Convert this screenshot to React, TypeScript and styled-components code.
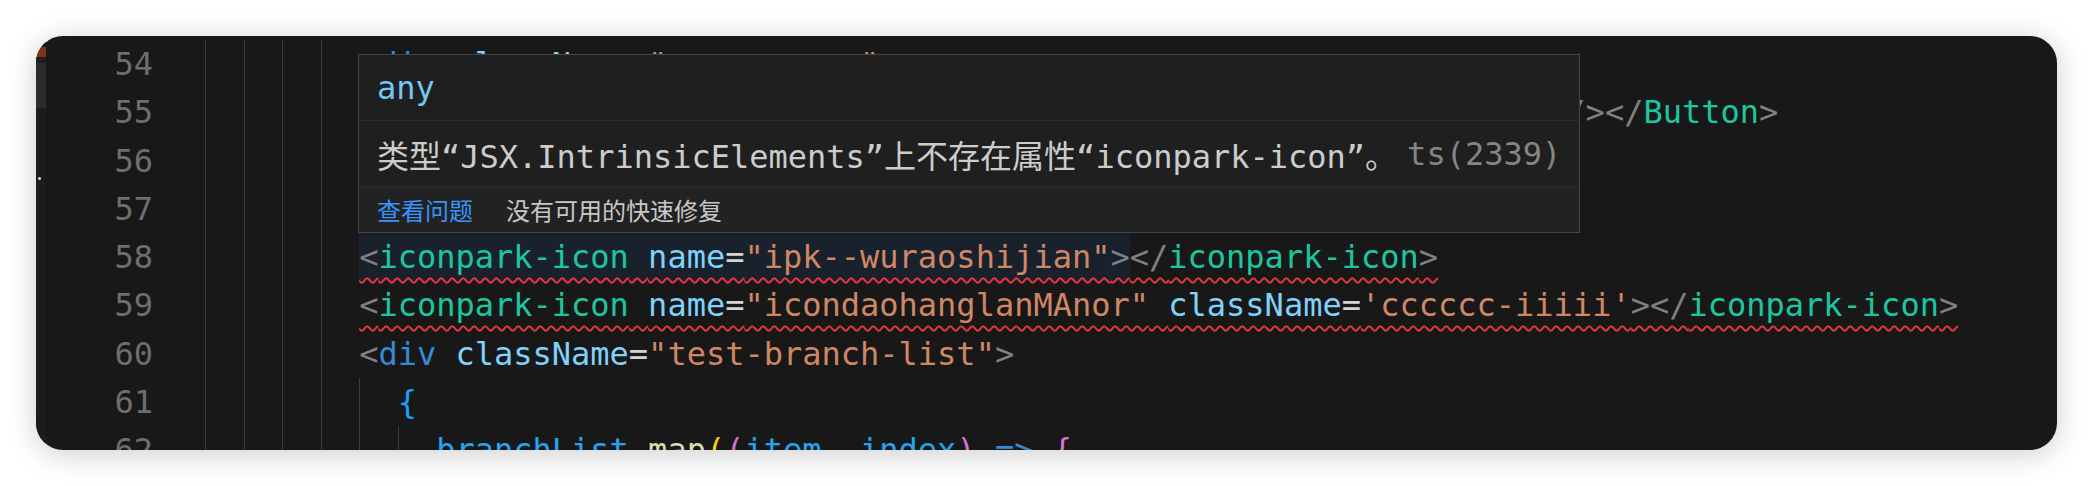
import React from 'react';
import styled, { createGlobalStyle } from 'styled-components';

const GlobalStyle = createGlobalStyle`
  html, body {
    margin: 0;
    padding: 0;
    background: #ffffff;
  }
`;

const palette = {
  p: '#808080',
  tag: '#1cc6a0',
  html: '#3889d4',
  attr: '#7fd2fb',
  str: '#cf8765',
  op: '#d4d4d4',
  v: '#22a6f2',
  fn: '#dcdcaa',
  b1: '#ffd700',
  b2: '#da70d6',
  b3: '#179fff',
  kw: '#3889d4',
  plain: '#d4d4d4',
};

type Color = keyof typeof palette;
type Tok = [string, Color];

interface CodeLine {
  n: number;
  guides: number;
  toks: Tok[];
  squiggle?: boolean;
  hl?: number; // number of leading tokens under the hover highlight
}

const Page = styled.div`
  padding: 36px 37px 36px 36px;
`;

const EditorCard = styled.div`
  display: flex;
  height: 414px;
  background: #181818;
  border-radius: 27px;
  overflow: hidden;
  box-shadow: 0 4px 30px rgba(0, 0, 0, 0.2);
  font-family: 'DejaVu Sans Mono', 'Noto Sans CJK SC', monospace;
  font-size: 32px;
`;

const SideStrip = styled.div`
  flex: 0 0 10px;
  display: flex;
  flex-direction: column;
  background: #1c1c1c;
`;

const StripPiece = styled.div<{ $h: number; $c: string }>`
  height: ${(p) => p.$h}px;
  background: ${(p) => p.$c};
`;

const StripDot = styled.div`
  width: 3px;
  height: 3px;
  margin: 69px 0 0 2px;
  border-radius: 50%;
  background: #d8d8d8;
`;

const Gutter = styled.div`
  flex: 0 0 107px;
  padding: 4px 52px 0 0;
  text-align: right;
  color: #6e6e6e;
`;

const LineNo = styled.div`
  height: 48.25px;
  line-height: 48.25px;
`;

const CodeArea = styled.div`
  flex: 1;
  position: relative;
  padding-top: 4px;
`;

const Line = styled.div`
  display: flex;
  height: 48.25px;
  line-height: 48.25px;
  white-space: pre;
`;

const Guide = styled.span`
  flex: none;
  width: 2ch;
  box-shadow: inset 1px 0 #3a3a3a;
`;

const Code = styled.span<{ $squiggle?: boolean }>`
  ${(p) =>
    p.$squiggle &&
    `
    text-decoration: underline wavy #f0353f;
    text-decoration-thickness: 1.5px;
    text-underline-offset: 9px;
    text-decoration-skip-ink: none;
  `}
`;

const Highlight = styled.span`
  display: inline-block;
  height: 48.25px;
  background: #18212c;
  text-decoration: underline wavy #f0353f;
  text-decoration-thickness: 1.5px;
  text-underline-offset: 9px;
  text-decoration-skip-ink: none;
`;

const T = styled.span<{ $c: Color }>`
  color: ${(p) => palette[p.$c]};
`;

const HoverWidget = styled.div`
  position: absolute;
  left: 153px;
  top: 18px;
  width: 1222px;
  height: 179px;
  box-sizing: border-box;
  border: 1px solid #454545;
  background: #1f1f1f;
  display: flex;
  flex-direction: column;
  z-index: 2;
`;

const TypeRow = styled.div`
  height: 65px;
  display: flex;
  align-items: center;
  padding-left: 18px;
  border-bottom: 1px solid #2c2c2c;
  color: #75c6f5;
`;

const MessageRow = styled.div`
  height: 65px;
  display: flex;
  align-items: center;
  padding-left: 18px;
  border-bottom: 1px solid #2c2c2c;
  color: #cccccc;
  white-space: pre;
`;

const Source = styled.span`
  margin-left: 10px;
  color: #858585;
`;

const StatusBar = styled.div`
  flex: 1;
  display: flex;
  align-items: center;
  gap: 33px;
  padding-left: 18px;
  background: #222222;
  font-family: 'Noto Sans CJK SC', sans-serif;
  font-size: 24px;
`;

const LinkAction = styled.span`
  color: #3794ff;
`;

const Disabled = styled.span`
  color: #c8c8c8;
`;

const lines: CodeLine[] = [
  {
    n: 54,
    guides: 4,
    toks: [['<', 'p'], ['div', 'html'], [' ', 'plain'], ['className', 'attr'], ['=', 'op'], ['"cover-wrap"', 'str'], ['>', 'p']],
  },
  {
    n: 55,
    guides: 4,
    toks: [
      ['<', 'p'], ['Button', 'tag'], [' ', 'plain'], ['type', 'attr'], ['=', 'op'], ['"link"', 'str'], [' ', 'plain'],
      ['title', 'attr'], ['=', 'op'], ['"新"', 'str'], ['><', 'p'], ['iconpark-icon', 'tag'], [' ', 'plain'],
      ['name', 'attr'], ['=', 'op'], ['"ipk--add-1"', 'str'], ['/></', 'p'], ['Button', 'tag'], ['>', 'p'],
    ],
  },
  {
    n: 56,
    guides: 4,
    toks: [['<', 'p'], ['span', 'html'], [' ', 'plain'], ['className', 'attr'], ['=', 'op'], ['"title"', 'str'], ['>', 'p'], ['图标', 'plain'], ['</', 'p'], ['span', 'html'], ['>', 'p']],
  },
  {
    n: 57,
    guides: 4,
    toks: [['<', 'p'], ['Divider', 'tag'], [' />', 'p']],
  },
  {
    n: 58,
    guides: 4,
    squiggle: true,
    hl: 7,
    toks: [
      ['<', 'p'], ['iconpark-icon', 'tag'], [' ', 'plain'], ['name', 'attr'], ['=', 'op'], ['"ipk--wuraoshijian"', 'str'], ['>', 'p'],
      ['</', 'p'], ['iconpark-icon', 'tag'], ['>', 'p'],
    ],
  },
  {
    n: 59,
    guides: 4,
    squiggle: true,
    toks: [
      ['<', 'p'], ['iconpark-icon', 'tag'], [' ', 'plain'], ['name', 'attr'], ['=', 'op'], ['"icondaohanglanMAnor"', 'str'], [' ', 'plain'],
      ['className', 'attr'], ['=', 'op'], ["'cccccc-iiiii'", 'str'], ['></', 'p'], ['iconpark-icon', 'tag'], ['>', 'p'],
    ],
  },
  {
    n: 60,
    guides: 4,
    toks: [['<', 'p'], ['div', 'html'], [' ', 'plain'], ['className', 'attr'], ['=', 'op'], ['"test-branch-list"', 'str'], ['>', 'p']],
  },
  {
    n: 61,
    guides: 5,
    toks: [['{', 'b3']],
  },
  {
    n: 62,
    guides: 6,
    toks: [
      ['branchList', 'v'], ['.', 'plain'], ['map', 'fn'], ['(', 'b1'], ['(', 'b2'], ['item', 'v'], [', ', 'plain'],
      ['index', 'v'], [')', 'b2'], [' ', 'plain'], ['=>', 'kw'], [' ', 'plain'], ['{', 'b2'],
    ],
  },
];

const renderToks = (toks: Tok[]) =>
  toks.map(([text, c], i) => (
    <T key={i} $c={c}>
      {text}
    </T>
  ));

const App = () => {
  return (
    <Page>
      <GlobalStyle />
      <EditorCard>
        <SideStrip>
          <StripPiece $h={11} $c="#181818" />
          <StripPiece $h={10} $c="#7a3514" />
          <StripPiece $h={6} $c="#1e1e1e" />
          <StripPiece $h={45} $c="#2a2a2f" />
          <StripDot />
        </SideStrip>

        <Gutter>
          {lines.map((l) => (
            <LineNo key={l.n}>{l.n}</LineNo>
          ))}
        </Gutter>

        <CodeArea>
          {lines.map((l) => (
            <Line key={l.n}>
              {Array.from({ length: l.guides }).map((_, i) => (
                <Guide key={i} />
              ))}
              <Code $squiggle={l.squiggle}>
                {l.hl ? (
                  <>
                    <Highlight>{renderToks(l.toks.slice(0, l.hl))}</Highlight>
                    {renderToks(l.toks.slice(l.hl))}
                  </>
                ) : (
                  renderToks(l.toks)
                )}
              </Code>
            </Line>
          ))}

          <HoverWidget>
            <TypeRow>any</TypeRow>
            <MessageRow>
              类型“JSX.IntrinsicElements”上不存在属性“iconpark-icon”。
              <Source>ts(2339)</Source>
            </MessageRow>
            <StatusBar>
              <LinkAction>查看问题</LinkAction>
              <Disabled>没有可用的快速修复</Disabled>
            </StatusBar>
          </HoverWidget>
        </CodeArea>
      </EditorCard>
    </Page>
  );
};

export default App;
